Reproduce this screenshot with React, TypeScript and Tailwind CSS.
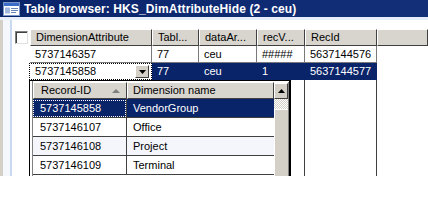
import React from "react";

const F = "font-['Liberation_Sans',Arial,sans-serif]";

function TitleIcon() {
  return (
    <svg width="17" height="14" viewBox="0 0 17 14" className="shrink-0">
      <rect x="0.5" y="0.5" width="16" height="13" fill="#ffffff" stroke="#7a96c8" />
      <rect x="1" y="1" width="15" height="3" fill="#3a6cc8" />
      <rect x="2" y="5.5" width="5" height="6" fill="#9fb8e0" />
      <rect x="8" y="6" width="7" height="1" fill="#6a86b8" />
      <rect x="8" y="8" width="7" height="1" fill="#6a86b8" />
      <rect x="8" y="10" width="5" height="1" fill="#6a86b8" />
    </svg>
  );
}

function DownBtn() {
  return (
    <div className="w-[14px] h-[13px] bg-[#d4d0c8] border border-t-white border-l-white border-r-[#404040] border-b-[#404040] flex items-center justify-center">
      <svg width="7" height="4" viewBox="0 0 7 4">
        <path d="M0 0h7L3.5 4z" fill="#000" />
      </svg>
    </div>
  );
}

const hdr =
  "h-full bg-[#d8d5ce] border-r border-r-[#404040] border-b border-b-[#404040] border-l border-l-white border-t border-t-white flex items-center pl-[5px] text-black overflow-hidden whitespace-nowrap";

const cell = "h-full border-r border-b border-[#7a7a7a] flex items-center pl-[5px] overflow-hidden whitespace-nowrap";

export default function App() {
  return (
    <div className={`w-[428px] h-[224px] bg-white overflow-hidden ${F} text-[11px] text-black`}>
      {/* title bar */}
      <div className="h-[17px] bg-gradient-to-r from-[#0a246a] to-[#122f78] flex items-center pl-[3px] gap-[4px]">
        <TitleIcon />
        <span className="text-white font-bold text-[12px] tracking-[0.1px] leading-none">
          Table browser: HKS_DimAttributeHide (2 - ceu)
        </span>
      </div>
      {/* body */}
      <div className="relative h-[159px] overflow-hidden flex flex-col">
        <div className="h-[3px] bg-[#e6eef9]" />
        <div className="flex-1 flex">
          <div className="w-[12px] flex">
            <div className="w-[3px] bg-[#d4d0c8]" />
            <div className="w-[7px] bg-[#f4f7fb]" />
            <div className="w-[2px] bg-[#c9d9ef]" />
          </div>
          <div className="flex-1 pt-[9px] flex flex-col">
            {/* header */}
            <div className="h-[17px] flex">
              <div className="w-[18px] h-full flex items-start pl-[3px] pt-[2px]">
                <div className="w-[13px] h-[13px] bg-white border border-t-[#808080] border-l-[#808080] border-r-[#e0e0e0] border-b-[#e0e0e0] shadow-[inset_1px_1px_0_#404040]" />
              </div>
              <div className={`w-[122px] ${hdr}`}>DimensionAttribute</div>
              <div className={`w-[47px] ${hdr}`}>Tabl...</div>
              <div className={`w-[58px] ${hdr}`}>dataAr...</div>
              <div className={`w-[48px] ${hdr}`}>recV...</div>
              <div className={`w-[72px] ${hdr}`}>RecId</div>
              <div className={`flex-1 ${hdr}`} />
            </div>
            {/* row 1 */}
            <div className="h-[17px] flex">
              <div className="w-[18px]" />
              <div className={`w-[122px] ${cell}`}>5737146357</div>
              <div className={`w-[47px] ${cell}`}>77</div>
              <div className={`w-[58px] ${cell}`}>ceu</div>
              <div className={`w-[48px] ${cell}`}>#####</div>
              <div className={`w-[72px] ${cell}`}>5637144576</div>
              <div className="flex-1" />
            </div>
            {/* row 2 selected */}
            <div className="h-[17px] flex">
              <div className="w-[17px]" />
              <div className="w-[123px] h-full border border-dotted border-black flex items-center pl-[5px] pr-[2px] bg-white">
                <span className="flex-1">5737145858</span>
                <DownBtn />
              </div>
              <div className="w-[225px] h-full bg-[#0a246a] text-white flex">
                <div className="w-[47px] h-full flex items-center pl-[5px] border-r border-[#0a246a]">77</div>
                <div className="w-[58px] h-full flex items-center pl-[5px]">ceu</div>
                <div className="w-[48px] h-full flex items-center pl-[5px]">1</div>
                <div className="w-[72px] h-full flex items-center pl-[5px]">5637144577</div>
              </div>
              <div className="flex-1" />
            </div>
            {/* empty area */}
            <div className="flex-1 flex">
              <div className="w-[18px]" />
              <div className="w-[122px] border-r border-[#404040]" />
              <div className="w-[47px] border-r border-[#404040]" />
              <div className="w-[58px] border-r border-[#404040]" />
              <div className="w-[48px] border-r border-[#404040]" />
              <div className="w-[72px] border-r border-[#404040]" />
              <div className="flex-1" />
            </div>
          </div>
        </div>

        {/* dropdown popup */}
        <div className="absolute left-[29px] top-[63px] w-[262px] h-[110px] bg-white border-l border-r-2 border-t border-black flex flex-col">
          <div className="flex-1 flex border-l border-[#808080] ml-[2px] pt-[1px]">
            <div className="flex-1 flex flex-col">
              <div className="h-[17px] flex">
                <div className={`w-[94px] ${hdr} pl-[7px] pr-[6px] justify-between`}>
                  <span>Record-ID</span>
                  <svg width="8" height="4" viewBox="0 0 8 4">
                    <path d="M0 4h8L4 0z" fill="#808080" />
                  </svg>
                </div>
                <div className={`flex-1 ${hdr}`}>Dimension name</div>
              </div>
              {[
                ["5737145858", "VendorGroup", "sel"],
                ["5737146107", "Office", ""],
                ["5737146108", "Project", "alt"],
                ["5737146109", "Terminal", ""],
              ].map(([id, name, k]) => (
                <div
                  key={id}
                  className={`h-[19px] flex border-b border-[#404040] ${
                    k === "sel" ? "bg-[#0a246a] text-white" : k === "alt" ? "bg-[#f5f6fc]" : "bg-white"
                  }`}
                >
                  <div className="w-[94px] h-full border-r border-[#404040] flex items-center">
                    {k === "sel" ? (
                      <div className="h-[17px] w-full border border-dotted border-white flex items-center pl-[6px]">{id}</div>
                    ) : (
                      <span className="pl-[7px]">{id}</span>
                    )}
                  </div>
                  <div className="flex-1 h-full flex items-center pl-[6px]">{name}</div>
                </div>
              ))}
            </div>
            {/* scrollbar */}
            <div className="w-[15px] flex flex-col border-r border-[#808080]">
              <div className="h-[16px] mt-[1px] bg-[#d4d0c8] border border-t-white border-l-white border-r-[#404040] border-b-[#404040] flex items-center justify-center">
                <svg width="7" height="4" viewBox="0 0 7 4">
                  <path d="M0 4h7L3.5 0z" fill="#000" />
                </svg>
              </div>
              <div className="h-[10px] bg-[repeating-conic-gradient(#ffffff_0_25%,#d4d0c8_0_50%)] bg-[length:2px_2px]" />
              <div className="flex-1 bg-[#d4d0c8] border-l border-t border-white" />
            </div>
          </div>
        </div>
      </div>
    </div>
  );
}
